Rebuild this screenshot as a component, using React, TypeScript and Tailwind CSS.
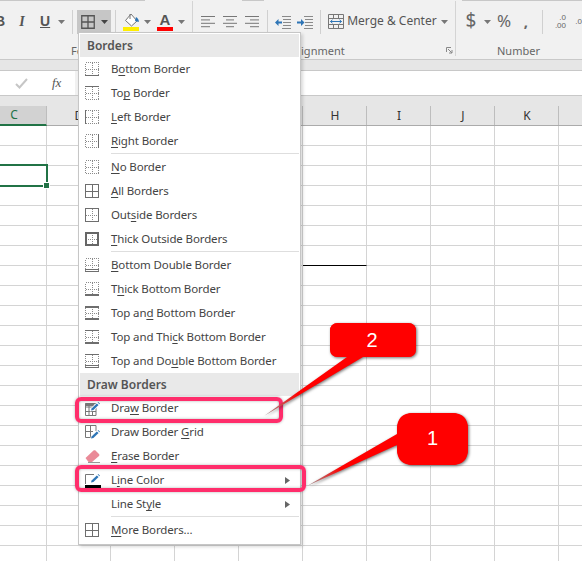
import React from "react";

const F = "[font-family:'Noto_Sans','Open_Sans',sans-serif]";

const Caret = ({ className = "" }: { className?: string }) => (
  <svg width="7" height="4" viewBox="0 0 7 4" className={className}>
    <path d="M0 0H7L3.5 4Z" fill="#777" />
  </svg>
);

const Sep = ({ ml }: { ml: string }) => <div className={`${ml} h-[24px] w-px bg-[#d0d0d0]`} />;

const Lines = ({ kind }: { kind: "l" | "c" | "r" }) => {
  const rows = kind === "l" ? [[0, 14], [0, 9], [0, 14], [0, 9]] : kind === "c" ? [[0, 14], [3, 11], [0, 14], [3, 11]] : [[0, 14], [5, 14], [0, 14], [5, 14]];
  return (
    <svg width="14" height="13" viewBox="0 0 14 13">
      {rows.map((r, i) => (
        <rect key={i} x={r[0]} y={1 + i * 3.4} width={r[1] - r[0]} height="1" fill="#777" />
      ))}
    </svg>
  );
};

const Indent = ({ flip }: { flip?: boolean }) => (
  <svg width="16" height="14" viewBox="0 0 16 14">
    <g fill="#8a8a8a">
      <rect x="7" y="1" width="9" height="1" />
      <rect x="8" y="4" width="8" height="1" />
      <rect x="8" y="7" width="8" height="1" />
      <rect x="8" y="10" width="8" height="1" />
      <rect x="7" y="13" width="9" height="1" />
    </g>
    {flip ? <path d="M0 6.5H4V4L7.5 7.5L4 11V8.5H0Z" fill="#2e75b6" /> : <path d="M7 6.5H3.5V4L0 7.5L3.5 11V8.5H7Z" fill="#2e75b6" />}
  </svg>
);

const Label = ({ className, children }: { className: string; children: string }) => (
  <div className={`${className} pt-[7px] text-[11px] leading-[10px] text-[#666] whitespace-nowrap ${F}`}>{children}</div>
);

const Ribbon = () => (
  <div className="h-[60px] bg-[#f1f1f1] border-b border-[#c9c9c9] flex flex-col">
    <div className="flex h-[1px] shrink-0">
      <div className="w-[145px] bg-[#c8c8c8]" />
      <div className="w-[97px]" />
      <div className="w-[22px] bg-[#c8c8c8]" />
      <div className="w-[198px]" />
      <div className="flex-1 bg-[#c8c8c8]" />
    </div>
    <div className="flex h-[55px] shrink-0">
      {/* Font */}
      <div className="w-[194px] border-r border-[#d4d4d4] flex flex-col">
        <div className="h-[38px] shrink-0 flex items-center pt-[3px]">
          <span className="-ml-[5px] w-[10px] text-center text-[14px] font-bold text-[#555] [font-family:'Liberation_Sans',sans-serif]">B</span>
          <span className="ml-[12px] w-[10px] text-center text-[14px] font-bold italic text-[#555] [font-family:'Liberation_Serif',serif]">I</span>
          <span className="ml-[13px] w-[10px] text-center text-[14px] font-bold underline text-[#555] [font-family:'Liberation_Sans',sans-serif]">U</span>
          <Caret className="ml-[8px]" />
          <Sep ml="ml-[7px]" />
          <div className="ml-[4px] w-[34px] h-[24px] bg-[#c6c6c6] flex items-center">
            <svg width="14" height="14" viewBox="0 0 14 14" className="ml-[4px]">
              <path d="M.75.75H13.25V13.25H.75ZM7 .75V13.25M.75 7H13.25" fill="none" stroke="#555" strokeWidth="1.3" />
            </svg>
            <Caret className="ml-[6px] [&>path]:fill-[#444]" />
          </div>
          <Sep ml="ml-[4px]" />
          <svg width="17" height="18" viewBox="0 0 17 18" className="ml-[7px]">
            <path d="M8 1L14 8L8.5 13L2.5 7.5Z" fill="#fff" stroke="#777" />
            <path d="M7 1V6" stroke="#777" />
            <path d="M13 4C15 5 16 7 15.8 9L12 8Z" fill="#2e75b6" />
            <rect x="0" y="14" width="16" height="4" fill="#ffee00" />
          </svg>
          <Caret className="ml-[4px]" />
          <div className="ml-[6px] w-[16px] h-[18px] flex flex-col items-center">
            <span className="h-[14px] leading-[14px] text-[15px] font-bold text-[#555] [font-family:'Liberation_Sans',sans-serif]">A</span>
            <div className="w-[16px] h-[4px] bg-[#ff0000]" />
          </div>
          <Caret className="ml-[5px]" />
        </div>
        <Label className="pl-[71px]">Font</Label>
      </div>
      {/* Alignment */}
      <div className="w-[264px] border-r border-[#d4d4d4] flex flex-col">
        <div className="h-[38px] shrink-0 flex items-center pt-[3px]">
          <div className="ml-[8px]"><Lines kind="l" /></div>
          <div className="ml-[8px]"><Lines kind="c" /></div>
          <div className="ml-[8px]"><Lines kind="r" /></div>
          <Sep ml="ml-[8px]" />
          <div className="ml-[7px]"><Indent /></div>
          <div className="ml-[6px]"><Indent flip /></div>
          <Sep ml="ml-[7px]" />
          <svg width="16" height="15" viewBox="0 0 16 15" className="ml-[7px]">
            <path d="M.5.5H15.5V14.5H.5ZM.5 4.5H15.5M.5 10.5H15.5M5.5.5V4.5M10.5.5V4.5M5.5 10.5V14.5M10.5 10.5V14.5" fill="none" stroke="#777" />
            <path d="M2.5 7.5H13.5M4.5 5.8L2.5 7.5L4.5 9.2M11.5 5.8L13.5 7.5L11.5 9.2" fill="none" stroke="#2e75b6" />
          </svg>
          <span className={`ml-[3px] w-[85px] text-[12px] -mt-[2px] text-[#555] whitespace-nowrap ${F}`}>Merge &amp; Center</span>
          <Caret className="ml-[9px]" />
        </div>
        <div className="flex items-start">
          <Label className="ml-[98px] w-[52px]">Alignment</Label>
          <svg width="7" height="7" viewBox="0 0 7 7" className="ml-[103px] mt-[8px]">
            <path d="M.5 5V.5H5" fill="none" stroke="#888" />
            <path d="M2 2L6 6M6 3V6H3" fill="none" stroke="#888" />
          </svg>
        </div>
      </div>
      {/* Number */}
      <div className="flex-1 flex flex-col">
        <div className="h-[38px] shrink-0 flex items-center pt-[3px]">
          <span className={`ml-[8px] w-[14px] text-center text-[19px] -mt-[2px] text-[#666] ${F}`}>$</span>
          <Caret className="ml-[6px]" />
          <span className={`ml-[5px] w-[16px] text-center text-[17px] -mt-[2px] text-[#666] ${F}`}>%</span>
          <span className={`ml-[11px] w-[6px] text-center text-[15px] font-bold text-[#666] ${F}`}>,</span>
          <Sep ml="ml-[13px]" />
          <div className="ml-[7px] w-[16px] flex flex-col items-end leading-[8px] text-[8px] text-[#666] [font-family:'Liberation_Sans',sans-serif]">
            <span>.0</span><span>.00</span>
          </div>
          <div className="ml-[6px] w-[10px] flex flex-col items-end leading-[8px] text-[8px] text-[#666] [font-family:'Liberation_Sans',sans-serif]">
            <span>.0</span>
          </div>
        </div>
        <Label className="pl-[41px]">Number</Label>
      </div>
    </div>
  </div>
);

const FormulaBar = () => (
  <div className="h-[46px] bg-[#e6e6e6] flex flex-col">
    <div className="h-[10px]" />
    <div className="h-[26px] bg-[#f1f1f1] border-y border-[#c8c8c8] flex">
      <div className="w-[75px] bg-white flex items-center">
        <svg width="13" height="11" viewBox="0 0 13 11" className="ml-[15px]">
          <path d="M1 6L4.5 9.5L12 1" fill="none" stroke="#c6c6c6" strokeWidth="2" />
        </svg>
        <span className="ml-[24px] text-[13px] italic text-[#555] [font-family:'Liberation_Serif',serif]">fx</span>
      </div>
      <div className="w-[3px]" />
      <div className="flex-1 bg-white" />
    </div>
  </div>
);

const cols = ["C", "D", "", "", "", "H", "I", "J", "K", ""];
const colW = ["w-[47px]", "w-[64px]", "w-[64px]", "w-[64px]", "w-[64px]", "w-[64px]", "w-[64px]", "w-[64px]", "w-[64px]", "w-[24px]"];

const Sheet = () => (
  <div className="relative">
    <div className={`h-[20px] flex bg-[#e6e6e6] border-b border-[#ababab] text-[12px] text-[#333] ${F}`}>
      {cols.map((c, i) => (
        <div key={i} className={`${colW[i]} shrink-0 flex items-center justify-center border-r border-[#bdbdbd] ${i === 0 ? "pr-[18px] bg-[#d2d2d2] text-[#217346] border-b-2 border-b-[#217346] -mb-px" : "pl-[1px]"}`}>
          {c}
        </div>
      ))}
    </div>
    {Array.from({ length: 22 }).map((_, r) => (
      <div key={r} className="h-[20px] flex">
        {cols.map((_, i) => (
          <div key={i} className={`${colW[i]} shrink-0 border-r border-b border-r-[#d4d4d4] ${r === 6 && i === 5 ? "border-b-black" : "border-b-[#d4d4d4]"}`} />
        ))}
      </div>
    ))}
    <div className="absolute left-[-3px] top-[58px] w-[51px] h-[23px] border-2 border-[#217346]" />
    <div className="absolute left-[44px] top-[77px] w-[5px] h-[5px] bg-[#217346] outline outline-1 outline-white" />
  </div>
);

type Edge = "top" | "bottom" | "left" | "right" | "all" | "outside" | "thickOutside" | "dblBottom" | "thickBottom" | "topBottom" | "topThick" | "topDbl" | "none";

const BorderIcon = ({ e }: { e: Edge }) => {
  const c = "#6e6e6e";
  return (
    <svg width="14" height="14" viewBox="0 0 14 14" shapeRendering="crispEdges">
      {e !== "all" && (
        <path d="M.5.5H13.5V13.5H.5ZM7 .5V13.5M.5 7H13.5" fill="none" stroke="#8a8a8a" strokeDasharray="1 1" />
      )}
      {e === "all" && <path d="M.5.5H13.5V13.5H.5ZM7 .5V13.5M.5 7H13.5" fill="none" stroke={c} />}
      {(e === "top" || e === "topBottom" || e === "topThick" || e === "topDbl") && <rect x="0" y="0" width="14" height="1" fill={c} />}
      {e === "bottom" && <rect x="0" y="13" width="14" height="1" fill={c} />}
      {e === "topBottom" && <rect x="0" y="0" width="14" height="2" fill={c} />}
      {e === "left" && <rect x="0" y="0" width="1" height="14" fill={c} />}
      {e === "right" && <rect x="13" y="0" width="1" height="14" fill={c} />}
      {e === "outside" && <rect x=".5" y=".5" width="13" height="13" fill="none" stroke={c} />}
      {e === "thickOutside" && <rect x="1" y="1" width="12" height="12" fill="none" stroke="#666" strokeWidth="2" />}
      {(e === "dblBottom" || e === "topDbl") && (
        <>
          <rect x="0" y="11" width="14" height="1" fill={c} />
          <rect x="0" y="13" width="14" height="1" fill={c} />
        </>
      )}
      {(e === "thickBottom" || e === "topBottom" || e === "topThick") && <rect x="0" y="12" width="14" height="2" fill={c} />}
    </svg>
  );
};

const Pencil = ({ x = 0, y = 0 }: { x?: number; y?: number }) => (
  <g transform={`translate(${x} ${y})`}>
    <path d="M0 10.5L1 7L7.5 .8L10.3 3.4L3.6 9.7Z" fill="#fff" />
    <path d="M1 9.5L1.6 7.4L6.8 2.4L8.6 4.1L3.4 9Z" fill="#2e75b6" />
    <path d="M7.6 1.6L8.2 1L10 2.7L9.4 3.3Z" fill="#2e75b6" />
  </g>
);

const DrawIcon = () => (
  <svg width="16" height="15" viewBox="0 0 16 15">
    <path d="M.5 2.5H11V14.5H.5ZM4 2.5V14.5M7.5 7V14.5M.5 6H8M.5 10.5H11" fill="none" stroke="#777" />
    <rect x=".5" y="2" width="9" height="3" fill="#777" />
    <Pencil x={5} y={0} />
  </svg>
);
const GridIcon = () => (
  <svg width="16" height="15" viewBox="0 0 16 15">
    <path d="M.5.5H11V6M.5.5V12.5H6M5.5.5V12.5M.5 6.5H8" fill="none" stroke="#777" />
    <Pencil x={5} y={4} />
  </svg>
);
const EraseIcon = () => (
  <svg width="16" height="15" viewBox="0 0 16 15">
    <path d="M.5 9L8.5 1.5C9 1 10 1 10.5 1.5L14 5C14.5 5.5 14.5 6.5 14 7L7 13H3.5Z" fill="#ea8a98" />
    <path d="M3 13.5H15" stroke="#999" />
  </svg>
);
const LineIcon = () => (
  <svg width="16" height="15" viewBox="0 0 16 15">
    <path d="M.5 11V1.5H9" fill="none" stroke="#777" />
    <Pencil x={5} y={0} />
    <rect x="0" y="12" width="16" height="3" fill="#000" />
  </svg>
);

const Item = ({ pre, k, post, icon, arrow }: { pre: string; k: string; post: string; icon?: React.ReactNode; arrow?: boolean }) => (
  <div className="h-[24px] flex items-center pl-[5px]">
    <div className="w-[16px] h-[15px] flex items-center shrink-0">{icon}</div>
    <span className="ml-[10px] whitespace-pre text-[11.5px] tracking-[-0.13px] text-[#444]">
      {pre}
      <span className="underline underline-offset-2">{k}</span>
      {post}
    </span>
    {arrow && (
      <svg width="5" height="7" viewBox="0 0 5 7" className="ml-auto mr-[9px]">
        <path d="M0 0L5 3.5L0 7Z" fill="#666" />
      </svg>
    )}
  </div>
);

const Head = ({ children, h }: { children: string; h: string }) => (
  <div className={`${h} bg-[#e9e9e9] flex items-center pl-[7px] text-[12px] font-semibold text-[#555]`}>{children}</div>
);

const MSep = () => (
  <div className="h-[2px] pl-[31px]">
    <div className="h-px bg-[#dedede]" />
  </div>
);

const Menu = () => (
  <div className={`absolute left-[78px] top-[32px] w-[223px] h-[513px] bg-white border border-[#c6c6c6] p-px shadow-[2px_2px_3px_rgba(0,0,0,0.15)] ${F}`}>
    <Head h="h-[23px]">Borders</Head>
    <Item pre="B" k="o" post="ttom Border" icon={<BorderIcon e="bottom" />} />
    <Item pre="To" k="p" post=" Border" icon={<BorderIcon e="top" />} />
    <Item pre="" k="L" post="eft Border" icon={<BorderIcon e="left" />} />
    <Item pre="" k="R" post="ight Border" icon={<BorderIcon e="right" />} />
    <MSep />
    <Item pre="" k="N" post="o Border" icon={<BorderIcon e="none" />} />
    <Item pre="" k="A" post="ll Borders" icon={<BorderIcon e="all" />} />
    <Item pre="Out" k="s" post="ide Borders" icon={<BorderIcon e="outside" />} />
    <Item pre="" k="T" post="hick Outside Borders" icon={<BorderIcon e="thickOutside" />} />
    <MSep />
    <Item pre="" k="B" post="ottom Double Border" icon={<BorderIcon e="dblBottom" />} />
    <Item pre="T" k="h" post="ick Bottom Border" icon={<BorderIcon e="thickBottom" />} />
    <Item pre="Top an" k="d" post=" Bottom Border" icon={<BorderIcon e="topBottom" />} />
    <Item pre="Top and Thi" k="c" post="k Bottom Border" icon={<BorderIcon e="topThick" />} />
    <Item pre="Top and Do" k="u" post="ble Bottom Border" icon={<BorderIcon e="topDbl" />} />
    <Head h="h-[23px]">Draw Borders</Head>
    <Item pre="Dra" k="w" post=" Border" icon={<DrawIcon />} />
    <Item pre="Draw Border " k="G" post="rid" icon={<GridIcon />} />
    <Item pre="" k="E" post="rase Border" icon={<EraseIcon />} />
    <Item pre="L" k="i" post="ne Color" icon={<LineIcon />} arrow />
    <Item pre="Line St" k="y" post="le" arrow />
    <MSep />
    <Item pre="" k="M" post="ore Borders..." icon={<BorderIcon e="all" />} />
  </div>
);

const Overlays = () => (
  <>
    <div className="absolute left-[75px] top-[397px] w-[208px] h-[26px] rounded-[6px] border-[4px] border-[#ff2d6b] shadow-[0_0_3px_rgba(0,0,0,0.3),inset_0_0_3px_rgba(0,0,0,0.3)]" />
    <div className="absolute left-[75px] top-[465px] w-[231px] h-[27px] rounded-[6px] border-[4px] border-[#ff2d6b] shadow-[0_0_3px_rgba(0,0,0,0.3),inset_0_0_3px_rgba(0,0,0,0.3)]" />
    <svg width="582" height="561" viewBox="0 0 582 561" className="absolute left-0 top-0 pointer-events-none drop-shadow-[1px_1px_1.5px_rgba(0,0,0,0.55)]">
      <defs>
        <linearGradient id="t2" x1="264" y1="416" x2="296" y2="392" gradientUnits="userSpaceOnUse">
          <stop offset="0" stopColor="#999" />
          <stop offset="1" stopColor="#ff0000" />
        </linearGradient>
        <linearGradient id="t1" x1="307" y1="486" x2="340" y2="468" gradientUnits="userSpaceOnUse">
          <stop offset="0" stopColor="#999" />
          <stop offset="1" stopColor="#ff0000" />
        </linearGradient>
      </defs>
      <path d="M338 323H408Q416 323 416 331V349Q416 357 408 357H363L264 416L347 357H338Q330 357 330 349V331Q330 323 338 323Z" fill="url(#t2)" />
      <rect x="330" y="323" width="86" height="34" rx="8" fill="#ff0000" />
      <path d="M413 413H452Q468 413 468 429V449Q468 465 452 465H413Q397 465 397 449V445L307 486L397 434V429Q397 413 413 413Z" fill="url(#t1)" />
      <rect x="397" y="413" width="71" height="52" rx="16" fill="#ff0000" />
    </svg>
    <span className="absolute left-[329px] top-[323px] w-[86px] h-[34px] flex items-center justify-center text-[20px] text-white [font-family:'Liberation_Sans',sans-serif]">2</span>
    <span className="absolute left-[397px] top-[412px] w-[71px] h-[52px] flex items-center justify-center text-[20px] text-white [font-family:'Liberation_Sans',sans-serif]">1</span>
  </>
);

export default function App() {
  return (
    <div className="relative w-[582px] h-[561px] overflow-hidden bg-white">
      <Ribbon />
      <FormulaBar />
      <Sheet />
      <Menu />
      <Overlays />
    </div>
  );
}
